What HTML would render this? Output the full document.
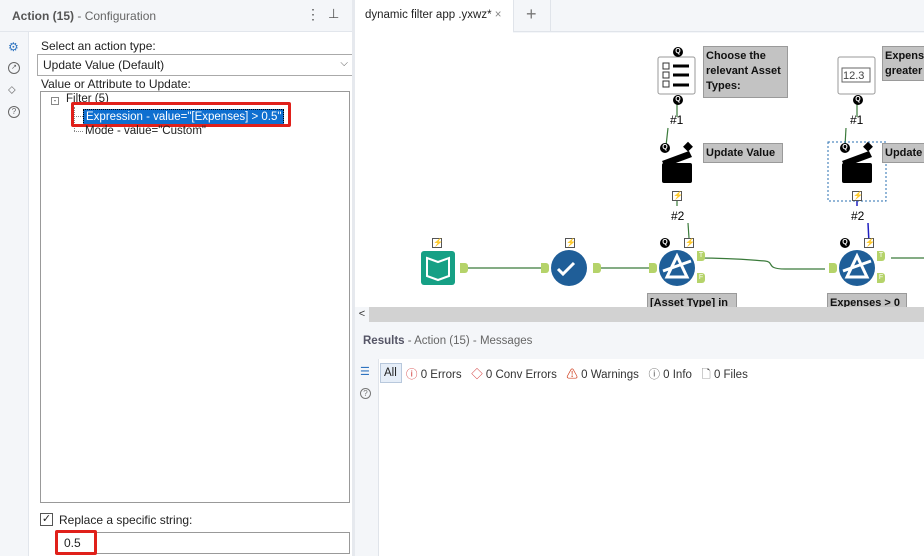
<!DOCTYPE html>
<html><head><meta charset="utf-8"><style>
*{box-sizing:border-box;margin:0;padding:0}
body{width:924px;height:556px;overflow:hidden;background:#f4f6f9;font-family:"Liberation Sans",sans-serif;font-size:12px;color:#222;position:relative}
.a{position:absolute}
.lbl{position:absolute;background:#c3c3c3;border:1px solid #9a9a9a;font-weight:bold;font-size:11px;color:#111;padding:2px 2px;line-height:15px;white-space:nowrap;overflow:hidden}
.ltn{position:absolute;width:10px;height:10px;border:1px solid #555;background:#fff;font-size:8px;line-height:8px;text-align:center;color:#000}
.q{position:absolute;width:10px;height:10px;border-radius:50%;background:#000;color:#fff;font-size:7px;line-height:10px;text-align:center;font-weight:bold}
.anc{position:absolute;width:8px;height:10px;background:#b5d36a;border-radius:0 3px 3px 0;font-size:7px;line-height:10px;text-align:center;color:#fff}
.h{position:absolute;font-size:12px;color:#000}
</style></head><body>
<div class="a" style="left:0;top:0;width:353px;height:556px;background:#f4f6f9"></div>
<div class="a" style="left:0;top:31px;width:353px;height:1px;background:#e2e6ec"></div>
<div class="a" style="left:12px;top:9px;font-size:12px;color:#444"><b style="color:#555;font-weight:bold">Action (15)</b> <span style="color:#666"> - Configuration</span></div>
<div class="a" style="left:306px;top:6px;font-size:14px;color:#555">⋮</div>
<div class="a" style="left:328px;top:6px;font-size:13px;color:#555">⊥</div>
<div class="a" style="left:28px;top:32px;width:1px;height:524px;background:#e2e6ec"></div>
<div class="a" style="left:29px;top:32px;width:323px;height:524px;background:#fff"></div>
<div class="a" style="left:8px;top:40px;color:#2f74c0;font-size:12px">⚙</div>
<div class="a" style="left:8px;top:62px;width:12px;height:12px;border:1px solid #666;border-radius:50%;font-size:7px;text-align:center;line-height:10px;color:#666">↗</div>
<div class="a" style="left:8px;top:84px;color:#666;font-size:11px">⬦</div>
<div class="a" style="left:8px;top:106px;width:12px;height:12px;border:1px solid #666;border-radius:50%;font-size:8px;text-align:center;line-height:10px;color:#666">?</div>
<div class="a" style="left:41px;top:39px;font-size:12px">Select an action type:</div>
<div class="a" style="left:37px;top:54px;width:316px;height:22px;border:1px solid #aaa;background:#fff;padding:3px 5px">Update Value (Default)<span style="position:absolute;right:4px;top:3px;color:#555;font-size:10px">⌵</span></div>
<div class="a" style="left:41px;top:77px">Value or Attribute to Update:</div>
<div class="a" style="left:40px;top:91px;width:310px;height:412px;border:1px solid #999;background:#fff"></div>
<div class="a" style="left:51px;top:97px;width:8px;height:8px;border:1px solid #888;font-size:8px;line-height:6px;text-align:center;color:#333">-</div>
<div class="a" style="left:66px;top:93px;font-size:11.5px">Filter (5)</div>
<div class="a" style="left:74px;top:107px;height:24px;border-left:1px dotted #888"></div>
<div class="a" style="left:74px;top:116px;width:9px;border-top:1px dotted #888"></div>
<div class="a" style="left:74px;top:131px;width:9px;border-top:1px dotted #888"></div>
<div class="a" style="left:83px;top:109px;background:#0f6fd0;color:#fff;padding:0 2px;font-size:11.5px;line-height:14px;border:1px dotted #000">Expression - value="[Expenses] &gt; 0.5"</div>
<div class="a" style="left:71px;top:102px;width:220px;height:25px;border:3px solid #e0201a;border-radius:2px"></div>
<div class="a" style="left:85px;top:125px;font-size:11.5px">Mode - value="Custom"</div>
<div class="a" style="left:40px;top:513px;width:13px;height:13px;border:1px solid #555;background:#fff;font-size:11px;line-height:11px;text-align:center">✓</div>
<div class="a" style="left:59px;top:513px">Replace a specific string:</div>
<div class="a" style="left:55px;top:532px;width:295px;height:22px;border:1px solid #999;background:#fff"></div>
<div class="a" style="left:55px;top:530px;width:42px;height:25px;border:3px solid #e0201a;border-radius:2px;padding:3px 6px">0.5</div>
<div class="a" style="left:352px;top:0;width:3px;height:556px;background:#e6e9ee"></div>
<div class="a" style="left:355px;top:0;width:569px;height:32px;background:#f4f6f9;border-bottom:1px solid #e0e4ea"></div>
<div class="a" style="left:355px;top:0;width:158px;height:33px;background:#fff;padding:9px 10px;font-size:11.5px;color:#222;white-space:nowrap">dynamic filter app .yxwz* <span style="color:#888">×</span></div>
<div class="a" style="left:513px;top:0;width:1px;height:32px;background:#e0e4ea"></div>
<div class="a" style="left:526px;top:4px;font-size:18px;color:#777">+</div>
<div class="a" style="left:550px;top:0;width:1px;height:32px;background:#e0e4ea"></div>
<div class="a" style="left:355px;top:33px;width:569px;height:275px;background:#fff"></div>
<svg class="a" style="left:355px;top:33px" width="569" height="275">
<g stroke="#3a7a3a" stroke-width="1.2" fill="none">
<line x1="111" y1="235" x2="187" y2="235"/>
<line x1="243" y1="235" x2="296" y2="235"/>
<path d="M342 225 C380 225 395 227 410 228 C420 229 410 236 430 236 L470 236"/>
<line x1="322" y1="68" x2="322" y2="84"/>
<line x1="313" y1="95" x2="311" y2="113"/>
<line x1="502" y1="68" x2="502" y2="84"/>
<line x1="491" y1="95" x2="490" y2="113"/>
<line x1="333" y1="190" x2="334" y2="205"/>
<line x1="322" y1="166" x2="322" y2="173"/>
<line x1="536" y1="225" x2="569" y2="225"/>
</g>
<g stroke="#2020c0" stroke-width="1.5"><line x1="502" y1="166" x2="502" y2="173"/><line x1="513" y1="190" x2="514" y2="210"/></g>
<rect x="66" y="218" width="34" height="34" rx="3" fill="#16a085"/>
<path d="M72 225 L83 229 L94 225 L94 243 L83 247 L72 243 Z" fill="none" stroke="#fff" stroke-width="2"/>
<circle cx="214" cy="235" r="18" fill="#1f5e98"/>
<path d="M203 236 l5 5 l11 -11" stroke="#fff" stroke-width="3" fill="none"/>
<circle cx="322" cy="235" r="18" fill="#1f5e98"/>
<circle cx="502" cy="235" r="18" fill="#1f5e98"/>
<path d="M322 223 L312 244 L332 244 Z M308 238 L336 228" stroke="#fff" stroke-width="3" fill="none"/>
<path d="M502 223 L492 244 L512 244 Z M488 238 L516 228" stroke="#fff" stroke-width="3" fill="none"/>
<rect x="303" y="24" width="37" height="37" rx="2" fill="#fff" stroke="#999"/>
<g stroke="#000" stroke-width="3"><line x1="318" y1="33" x2="334" y2="33"/><line x1="318" y1="42" x2="334" y2="42"/><line x1="318" y1="52" x2="334" y2="52"/></g>
<g fill="#fff" stroke="#333"><rect x="308" y="30" width="6" height="6"/><rect x="308" y="39" width="6" height="6"/><rect x="308" y="48" width="6" height="6"/></g>
<rect x="483" y="24" width="37" height="37" rx="2" fill="#fff" stroke="#999"/>
<rect x="487" y="35" width="28" height="14" fill="#fff" stroke="#666"/>
<text x="488" y="46" font-size="11" font-family="Liberation Sans" fill="#444">12.3</text>
<rect x="307" y="130" width="30" height="20" rx="2" fill="#000"/>
<path d="M307 128 l27 -10 l3 6 l-27 10 z" fill="#000"/>
<rect x="487" y="130" width="30" height="20" rx="2" fill="#000"/>
<path d="M487 128 l27 -10 l3 6 l-27 10 z" fill="#000"/>
<rect x="330" y="110" width="7" height="7" transform="rotate(45 333 113)" fill="#000"/>
<rect x="510" y="110" width="7" height="7" transform="rotate(45 513 113)" fill="#000"/>
<rect x="473" y="109" width="58" height="59" fill="none" stroke="#2a6fb0" stroke-dasharray="2,2"/>
</svg>
<div class="q" style="left:673px;top:47px">Q</div><div class="q" style="left:673px;top:95px">Q</div><div class="q" style="left:853px;top:95px">Q</div>
<div class="q" style="left:660px;top:143px">Q</div><div class="q" style="left:840px;top:143px">Q</div>
<div class="q" style="left:660px;top:238px">Q</div><div class="q" style="left:840px;top:238px">Q</div>
<div class="ltn" style="left:432px;top:238px">⚡</div><div class="ltn" style="left:565px;top:238px">⚡</div>
<div class="ltn" style="left:684px;top:238px">⚡</div><div class="ltn" style="left:864px;top:238px">⚡</div>
<div class="ltn" style="left:672px;top:191px">⚡</div><div class="ltn" style="left:852px;top:191px">⚡</div>
<div class="h" style="left:670px;top:113px">#1</div><div class="h" style="left:850px;top:113px">#1</div>
<div class="h" style="left:671px;top:209px">#2</div><div class="h" style="left:851px;top:209px">#2</div>
<div class="anc" style="left:460px;top:263px"></div><div class="anc" style="left:541px;top:263px"></div>
<div class="anc" style="left:593px;top:263px"></div><div class="anc" style="left:649px;top:263px"></div>
<div class="anc" style="left:829px;top:263px"></div>
<div class="anc" style="left:697px;top:251px">T</div><div class="anc" style="left:697px;top:273px">F</div>
<div class="anc" style="left:877px;top:251px">T</div><div class="anc" style="left:877px;top:273px">F</div>
<div class="lbl" style="left:703px;top:46px;width:85px;height:52px">Choose the<br>relevant Asset<br>Types:</div>
<div class="lbl" style="left:882px;top:46px;width:50px;height:35px">Expenses<br>greater</div>
<div class="lbl" style="left:703px;top:143px;width:80px;height:20px">Update Value</div>
<div class="lbl" style="left:882px;top:143px;width:50px;height:20px">Update</div>
<div class="lbl" style="left:647px;top:293px;width:90px;height:18px">[Asset Type] in</div>
<div class="lbl" style="left:827px;top:293px;width:80px;height:18px">Expenses &gt; 0</div>
<div class="a" style="left:355px;top:307px;width:569px;height:15px;background:#d2d2d2"></div>
<div class="a" style="left:355px;top:307px;width:14px;height:15px;background:#f4f6f9;font-size:11px;line-height:15px;text-align:center;color:#333">&lt;</div>
<div class="a" style="left:355px;top:322px;width:569px;height:3px;background:#f4f6f9"></div>
<div class="a" style="left:363px;top:335px;font-size:11.5px;color:#666"><b style="color:#556">Results</b> - Action (15) - Messages</div>
<div class="a" style="left:378px;top:359px;width:546px;height:197px;background:#fff;border-left:1px solid #e0e4ea"></div>
<div class="a" style="left:360px;top:365px;color:#2f74c0;font-size:11px">☰</div>
<div class="a" style="left:360px;top:388px;width:11px;height:11px;border:1px solid #777;border-radius:50%;font-size:8px;line-height:9px;text-align:center;color:#777">?</div>
<div class="a" style="left:380px;top:363px;width:22px;height:20px;background:#e6eef8;border:1px solid #b8c8dc;font-size:11.5px;padding:3px 3px">All</div>
<div class="a" style="left:406px;top:366px;font-size:11.5px;color:#333;white-space:nowrap"><span style="color:#d03030">ⓘ</span> 0 Errors &nbsp;&nbsp;<span style="color:#d03030">◇</span> 0 Conv Errors &nbsp;&nbsp;<span style="color:#d04020">⚠</span> 0 Warnings &nbsp;&nbsp;<span style="color:#555">ⓘ</span> 0 Info &nbsp;&nbsp;<span style="color:#555">🗋</span> 0 Files</div>
</body></html>
